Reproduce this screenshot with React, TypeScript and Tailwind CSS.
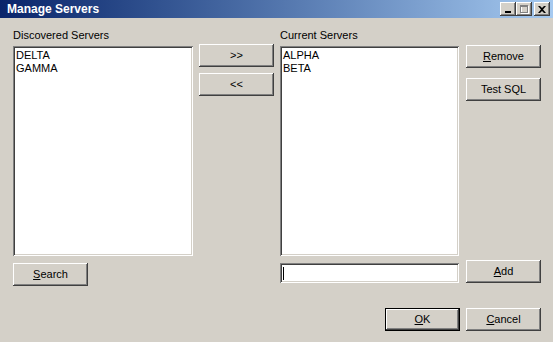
const raised =
  'shadow-[inset_-1px_-1px_#404040,inset_1px_1px_#ffffff,inset_-2px_-2px_#808080,inset_2px_2px_#d4d0c8]';
const sunken =
  'shadow-[inset_1px_1px_#808080,inset_-1px_-1px_#ffffff,inset_2px_2px_#404040,inset_-2px_-2px_#d4d0c8]';

function Button({
  children,
  className = '',
  isDefault = false,
}: {
  children: React.ReactNode;
  className?: string;
  isDefault?: boolean;
}) {
  if (isDefault) {
    return (
      <div className={`h-[23px] w-[75px] border border-black bg-[#d4d0c8] ${className}`}>
        <div className={`flex h-full w-full items-center justify-center ${raised}`}>{children}</div>
      </div>
    );
  }
  return (
    <div className={`flex h-[23px] w-[75px] items-center justify-center bg-[#d4d0c8] ${raised} ${className}`}>
      {children}
    </div>
  );
}

function ListBox({ items }: { items: string[] }) {
  return (
    <div className={`h-[210px] bg-white px-[3px] pt-[3px] ${sunken}`}>
      {items.map((item) => (
        <div key={item} className="h-[13px] leading-[13px]">
          {item}
        </div>
      ))}
    </div>
  );
}

function CaptionButton({ children, className = '' }: { children: React.ReactNode; className?: string }) {
  return (
    <div className={`flex h-[14px] w-[16px] items-center justify-center bg-[#d4d0c8] ${raised} ${className}`}>
      {children}
    </div>
  );
}

export default function App() {
  return (
    <div className="h-[342px] w-[553px] overflow-hidden bg-[#d4d0c8] font-['Liberation_Sans',Arial,sans-serif] text-[11px] text-black">
      <div className="flex h-[18px] items-center bg-gradient-to-r from-[#0a246a] to-[#a6caf0] pl-[7px] pr-[3px]">
        <span className="flex-1 text-[12px] font-bold text-white">Manage Servers</span>
        <CaptionButton>
          <svg width="8" height="7" viewBox="0 0 8 7">
            <rect x="1" y="5" width="6" height="2" fill="#000" />
          </svg>
        </CaptionButton>
        <CaptionButton>
          <svg width="9" height="9" viewBox="0 0 9 9">
            <rect x="1.5" y="1.5" width="7" height="7" fill="none" stroke="#fff" />
            <rect x="0.5" y="0.5" width="7" height="7" fill="none" stroke="#808080" />
            <rect x="0" y="0" width="8" height="2" fill="#808080" />
          </svg>
        </CaptionButton>
        <CaptionButton className="ml-[2px]">
          <svg width="8" height="7" viewBox="0 0 8 7">
            <path d="M0 0h2l2 2 2-2h2L5 3.5 8 7H6L4 5 2 7H0l3-3.5z" fill="#000" />
          </svg>
        </CaptionButton>
      </div>

      <div className="flex pl-[13px] pt-[11px]">
        <div className="w-[180px]">
          <div className="h-[17px] leading-[13px]">Discovered Servers</div>
          <ListBox items={['DELTA', 'GAMMA']} />
          <Button className="mt-[7px]">
            <span>
              <span className="underline">S</span>earch
            </span>
          </Button>
        </div>

        <div className="ml-[6px] mt-[15px] flex w-[74px] flex-col gap-[6px]">
          <Button className="w-[74px]">&gt;&gt;</Button>
          <Button className="w-[74px]">&lt;&lt;</Button>
        </div>

        <div className="ml-[7px] w-[179px]">
          <div className="h-[17px] leading-[13px]">Current Servers</div>
          <ListBox items={['ALPHA', 'BETA']} />
          <div className={`mt-[7px] flex h-[20px] items-center bg-white pl-[3px] ${sunken}`}>
            <div className="h-[13px] w-px bg-black" />
          </div>
        </div>

        <div className="ml-[7px] mt-[16px] flex flex-col">
          <Button>
            <span>
              <span className="underline">R</span>emove
            </span>
          </Button>
          <Button className="mt-[10px]">Test SQL</Button>
          <Button className="mt-[159px]">
            <span>
              <span className="underline">A</span>dd
            </span>
          </Button>
        </div>
      </div>

      <div className="mt-[22px] flex justify-end gap-[6px] pr-[12px]">
        <Button isDefault>
          <span>
            <span className="underline">O</span>K
          </span>
        </Button>
        <Button>
          <span>
            <span className="underline">C</span>ancel
          </span>
        </Button>
      </div>
    </div>
  );
}
